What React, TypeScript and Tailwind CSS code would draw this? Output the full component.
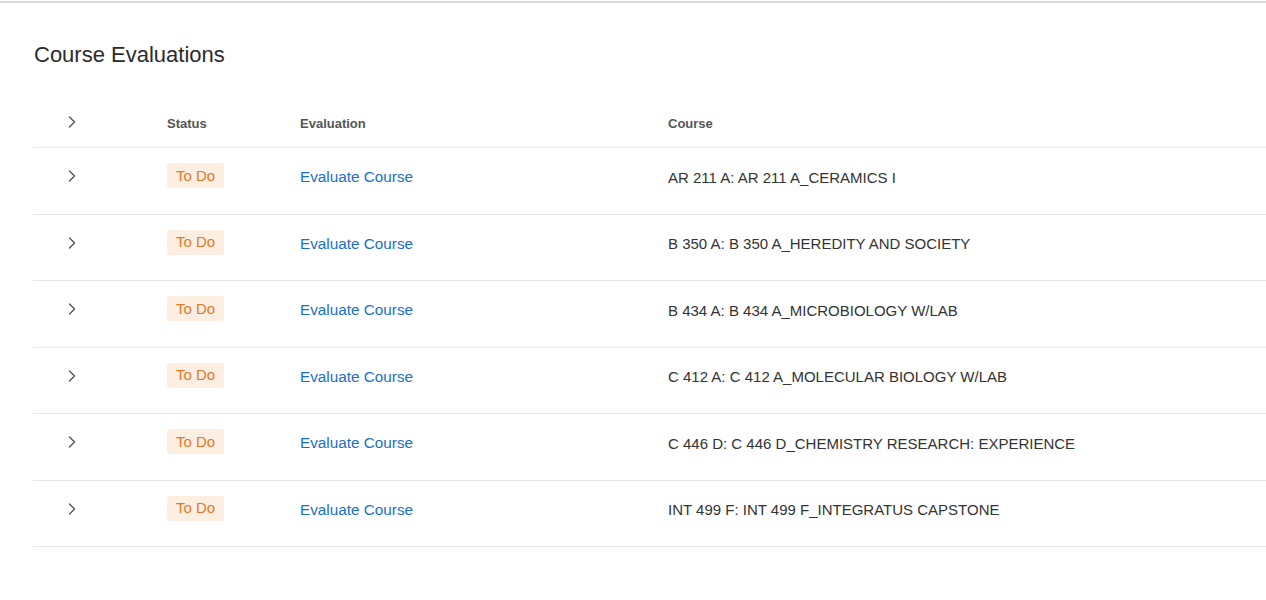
import React from "react";

const rows = [
  "AR 211 A: AR 211 A_CERAMICS I",
  "B 350 A: B 350 A_HEREDITY AND SOCIETY",
  "B 434 A: B 434 A_MICROBIOLOGY W/LAB",
  "C 412 A: C 412 A_MOLECULAR BIOLOGY W/LAB",
  "C 446 D: C 446 D_CHEMISTRY RESEARCH: EXPERIENCE",
  "INT 499 F: INT 499 F_INTEGRATUS CAPSTONE",
];

function Chevron() {
  return (
    <svg width="8" height="12" viewBox="0 0 8 12" fill="none" className="block">
      <polyline points="1.5,1 6.5,6 1.5,11" stroke="#555" strokeWidth="1.4" strokeLinecap="round" strokeLinejoin="round" />
    </svg>
  );
}

export default function App() {
  return (
    <div className="min-h-[600px] w-[1266px] bg-white overflow-hidden" style={{ fontFamily: '"Liberation Sans", Arial, sans-serif' }}>
      <div className="h-px" />
      <div className="h-[2px] bg-[#d9d9d9]" />
      <div className="pl-[33px]">
        <h1 className="pt-[38px] text-[22px] leading-[28px] text-[#2b2b2b] pl-px">Course Evaluations</h1>
        <div className="mt-[32px] w-[1300px]">
          <div className="flex items-center h-[47px] border-b border-[#e6e6e6]">
            <div className="w-[134px] pl-[35px] pb-[5px]"><Chevron /></div>
            <div className="w-[133px] text-[13px] font-bold text-[#555]">Status</div>
            <div className="w-[368px] text-[13px] font-bold text-[#555]">Evaluation</div>
            <div className="text-[13px] font-bold text-[#555]">Course</div>
          </div>
          {rows.map((c, i) => (
            <div key={i} className="flex items-center h-[66.5px] border-b border-[#e6e6e6] pb-[6px]">
              <div className="w-[134px] pl-[35px] pb-[3px]"><Chevron /></div>
              <div className="w-[133px] pb-[4px]">
                <span className="inline-flex items-center h-[25px] px-[9px] rounded-[3px] bg-[#fdeee2] text-[#e27a25] text-[15px]">To Do</span>
              </div>
              <div className="w-[368px] text-[15.3px] text-[#1a6fc8]">Evaluate Course</div>
              <div className="text-[15px] text-[#333]">{c}</div>
            </div>
          ))}
        </div>
      </div>
    </div>
  );
}
